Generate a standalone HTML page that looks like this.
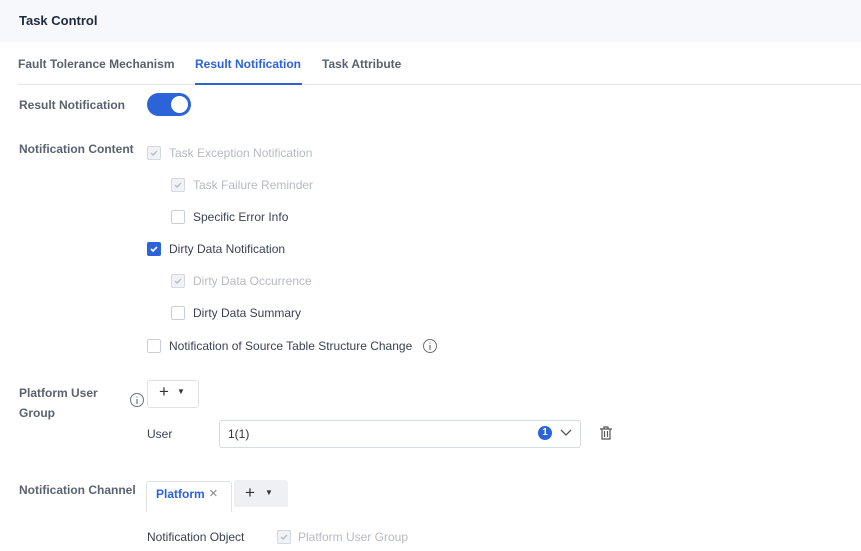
<!DOCTYPE html><html><head><style>
body{margin:0;width:861px;height:551px;background:#fff;font-family:"Liberation Sans",sans-serif;position:relative;overflow:hidden;font-size:12px;color:#4a5366}
.a{position:absolute;white-space:nowrap}
.cb{position:absolute;width:12px;height:12px;border:1px solid #c9ced8;border-radius:2px;background:#fff}
.cb.d{background:#f0f2f5;border-color:#d3d7de}
.cb.on{background:#2d63d9;border-color:#2d63d9}
.cb svg{position:absolute;left:1px;top:1px}
.g{color:#b4bac4}
.lbl{color:#5a6272;font-weight:bold}
</style></head><body>
<div class="a" style="left:0;top:0;width:861px;height:42px;background:#f7f8fb"></div>
<div class="a" style="left:19px;top:13px;font-size:13px;font-weight:bold;color:#1f2a3d">Task Control</div>
<div class="a" style="left:18px;top:57px;font-weight:bold;color:#59616f">Fault Tolerance Mechanism</div>
<div class="a" style="left:195px;top:57px;font-weight:bold;color:#2d63d9">Result Notification</div>
<div class="a" style="left:322px;top:57px;font-weight:bold;color:#59616f">Task Attribute</div>
<div class="a" style="left:18px;top:84px;width:843px;height:1px;background:#e3e6ec"></div>
<div class="a" style="left:195px;top:83px;width:107px;height:2px;background:#2d63d9"></div>
<div class="a lbl" style="left:19px;top:98px">Result Notification</div>
<div class="a" style="left:147px;top:93px;width:44px;height:23px;border-radius:12px;background:#2d63d9"></div>
<div class="a" style="left:171px;top:96px;width:17px;height:17px;border-radius:50%;background:#fff"></div>
<div class="a lbl" style="left:19px;top:142px">Notification Content</div>

<div class="cb d" style="left:147px;top:146px"><svg width="10" height="10"><path d="M2 5l2 2 4-4" stroke="#b4bac4" stroke-width="1.4" fill="none"/></svg></div>
<div class="a g" style="left:169px;top:146px">Task Exception Notification</div>
<div class="cb d" style="left:171px;top:178px"><svg width="10" height="10"><path d="M2 5l2 2 4-4" stroke="#b4bac4" stroke-width="1.4" fill="none"/></svg></div>
<div class="a g" style="left:193px;top:178px">Task Failure Reminder</div>
<div class="cb" style="left:171px;top:210px"></div>
<div class="a" style="left:193px;top:210px;color:#3a4254">Specific Error Info</div>
<div class="cb on" style="left:147px;top:242px"><svg width="10" height="10"><path d="M2 5l2 2 4-4" stroke="#fff" stroke-width="1.6" fill="none"/></svg></div>
<div class="a" style="left:169px;top:242px;color:#3a4254">Dirty Data Notification</div>
<div class="cb d" style="left:171px;top:274px"><svg width="10" height="10"><path d="M2 5l2 2 4-4" stroke="#b4bac4" stroke-width="1.4" fill="none"/></svg></div>
<div class="a g" style="left:193px;top:274px">Dirty Data Occurrence</div>
<div class="cb" style="left:171px;top:306px"></div>
<div class="a" style="left:193px;top:306px;color:#3a4254">Dirty Data Summary</div>
<div class="cb" style="left:147px;top:339px"></div>
<div class="a" style="left:169px;top:339px;color:#3a4254">Notification of Source Table Structure Change</div>
<svg class="a" style="left:422px;top:338px" width="16" height="16"><circle cx="8" cy="8" r="6.5" stroke="#6b7280" fill="none"/><path d="M8 7v5M8 4.5v1" stroke="#6b7280" stroke-width="1.2"/></svg>

<div class="a lbl" style="left:19px;top:383px;line-height:20px">Platform User<br>Group</div>
<svg class="a" style="left:129px;top:392px" width="16" height="16"><circle cx="8" cy="8" r="6.5" stroke="#6b7280" fill="none"/><path d="M8 7v5M8 4.5v1" stroke="#6b7280" stroke-width="1.2"/></svg>
<div class="a" style="left:147px;top:380px;width:50px;height:26px;border:1px solid #dfe2e8;border-radius:3px"></div>
<div class="a" style="left:159px;top:382px;font-size:17px;color:#333">+</div>
<div class="a" style="left:177px;top:387px;font-size:8px;color:#333">▼</div>
<div class="a" style="left:147px;top:427px;color:#3a4254">User</div>
<div class="a" style="left:219px;top:420px;width:360px;height:26px;border:1px solid #d7dbe2;border-radius:3px"></div>
<div class="a" style="left:228px;top:427px;color:#333">1(1)</div>
<div class="a" style="left:538px;top:426px;width:14px;height:14px;border-radius:50%;background:#2d63d9;color:#fff;font-size:10px;font-weight:bold;text-align:center;line-height:14px">1</div>
<svg class="a" style="left:559px;top:427px" width="14" height="12"><path d="M2 3l5 5 5-5" stroke="#555" stroke-width="1.3" fill="none"/></svg>
<svg class="a" style="left:599px;top:426px" width="14" height="14"><path d="M1 3h12M5 3V1h4v2M3 3v10h8V3M5.5 5v6M8.5 5v6" stroke="#555" stroke-width="1.2" fill="none"/></svg>

<div class="a lbl" style="left:19px;top:483px">Notification Channel</div>
<div class="a" style="left:146px;top:481px;width:84px;height:30px;border:1px solid #dfe2e8;border-bottom:none;border-radius:3px 3px 0 0;background:#fff"></div>
<div class="a" style="left:156px;top:487px;font-weight:bold;color:#2d63d9">Platform</div>
<div class="a" style="left:209px;top:485px;font-size:15px;color:#888">×</div>
<div class="a" style="left:234px;top:480px;width:54px;height:27px;background:#eef0f4;border-radius:3px 3px 0 0"></div>
<div class="a" style="left:245px;top:483px;font-size:17px;color:#333">+</div>
<div class="a" style="left:265px;top:488px;font-size:8px;color:#333">▼</div>
<div class="a" style="left:147px;top:530px;color:#3a4254">Notification Object</div>
<div class="cb d" style="left:277px;top:530px"><svg width="10" height="10"><path d="M2 5l2 2 4-4" stroke="#b4bac4" stroke-width="1.4" fill="none"/></svg></div>
<div class="a g" style="left:298px;top:530px">Platform User Group</div>
</body></html>
